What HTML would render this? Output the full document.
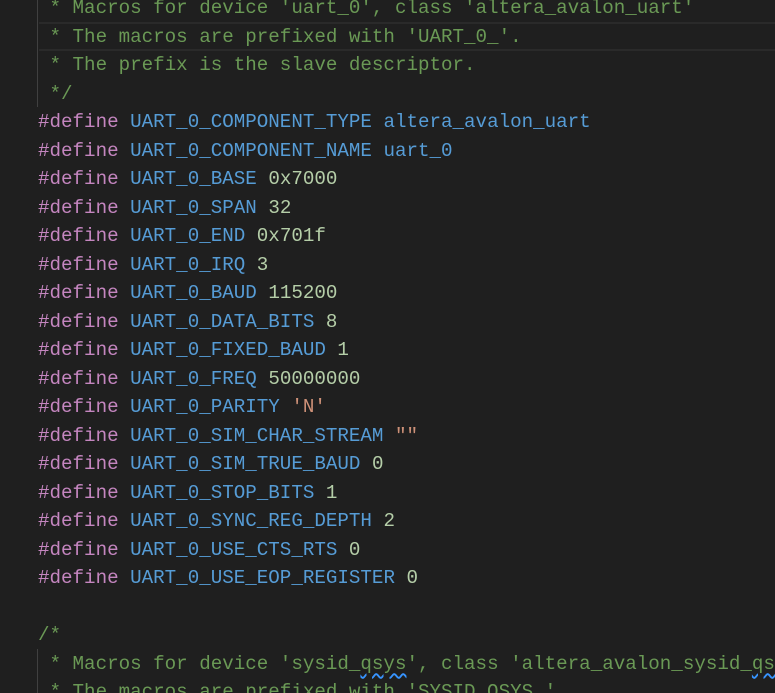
<!DOCTYPE html><html style="overflow:hidden;height:693px"><head><style>
body{margin:0;width:775px;height:693px;background:#1f1f1f;overflow:hidden;position:relative;font-family:"Liberation Mono",monospace;font-size:19.2px}
.l{position:absolute;left:38px;height:28.5px;line-height:28.5px;white-space:pre;color:#9cdcfe}
.c{color:#6a9955}.k{color:#c586c0}.m{color:#569cd6}.n{color:#b5cea8}.s{color:#ce9178}
.g{position:absolute;left:37px;width:1px;background:#404040}
.sq{text-decoration:underline wavy #3794ff;text-underline-offset:4px}
</style></head><body>
<div class="g" style="top:0;height:107px"></div>
<div class="g" style="top:649px;height:44px"></div>
<div style="position:absolute;left:39px;right:0;top:22px;height:25px;border-top:2px solid #2a2a2a;border-bottom:2px solid #2a2a2a"></div>
<div class="l c" style="top:-6px"> * Macros for device 'uart_0', class 'altera_avalon_uart'</div>
<div class="l c" style="top:22.5px"> * The macros are prefixed with 'UART_0_'.</div>
<div class="l c" style="top:51px"> * The prefix is the slave descriptor.</div>
<div class="l c" style="top:79.5px"> */</div>
<div class="l" style="top:108px"><span class="k">#define</span> <span class="m">UART_0_COMPONENT_TYPE altera_avalon_uart</span></div>
<div class="l" style="top:136.5px"><span class="k">#define</span> <span class="m">UART_0_COMPONENT_NAME uart_0</span></div>
<div class="l" style="top:165px"><span class="k">#define</span> <span class="m">UART_0_BASE</span> <span class="n">0x7000</span></div>
<div class="l" style="top:193.5px"><span class="k">#define</span> <span class="m">UART_0_SPAN</span> <span class="n">32</span></div>
<div class="l" style="top:222px"><span class="k">#define</span> <span class="m">UART_0_END</span> <span class="n">0x701f</span></div>
<div class="l" style="top:250.5px"><span class="k">#define</span> <span class="m">UART_0_IRQ</span> <span class="n">3</span></div>
<div class="l" style="top:279px"><span class="k">#define</span> <span class="m">UART_0_BAUD</span> <span class="n">115200</span></div>
<div class="l" style="top:307.5px"><span class="k">#define</span> <span class="m">UART_0_DATA_BITS</span> <span class="n">8</span></div>
<div class="l" style="top:336px"><span class="k">#define</span> <span class="m">UART_0_FIXED_BAUD</span> <span class="n">1</span></div>
<div class="l" style="top:364.5px"><span class="k">#define</span> <span class="m">UART_0_FREQ</span> <span class="n">50000000</span></div>
<div class="l" style="top:393px"><span class="k">#define</span> <span class="m">UART_0_PARITY</span> <span class="s">'N'</span></div>
<div class="l" style="top:421.5px"><span class="k">#define</span> <span class="m">UART_0_SIM_CHAR_STREAM</span> <span class="s">""</span></div>
<div class="l" style="top:450px"><span class="k">#define</span> <span class="m">UART_0_SIM_TRUE_BAUD</span> <span class="n">0</span></div>
<div class="l" style="top:478.5px"><span class="k">#define</span> <span class="m">UART_0_STOP_BITS</span> <span class="n">1</span></div>
<div class="l" style="top:507px"><span class="k">#define</span> <span class="m">UART_0_SYNC_REG_DEPTH</span> <span class="n">2</span></div>
<div class="l" style="top:535.5px"><span class="k">#define</span> <span class="m">UART_0_USE_CTS_RTS</span> <span class="n">0</span></div>
<div class="l" style="top:564px"><span class="k">#define</span> <span class="m">UART_0_USE_EOP_REGISTER</span> <span class="n">0</span></div>
<div class="l c" style="top:621px">/*</div>
<div class="l c" style="top:649.5px"> * Macros for device 'sysid_<span class="sq">qsys</span>', class 'altera_avalon_sysid_<span class="sq">qsys</span>'</div>
<div class="l c" style="top:678px"> * The macros are prefixed with 'SYSID_QSYS_'.</div>
</body></html>
